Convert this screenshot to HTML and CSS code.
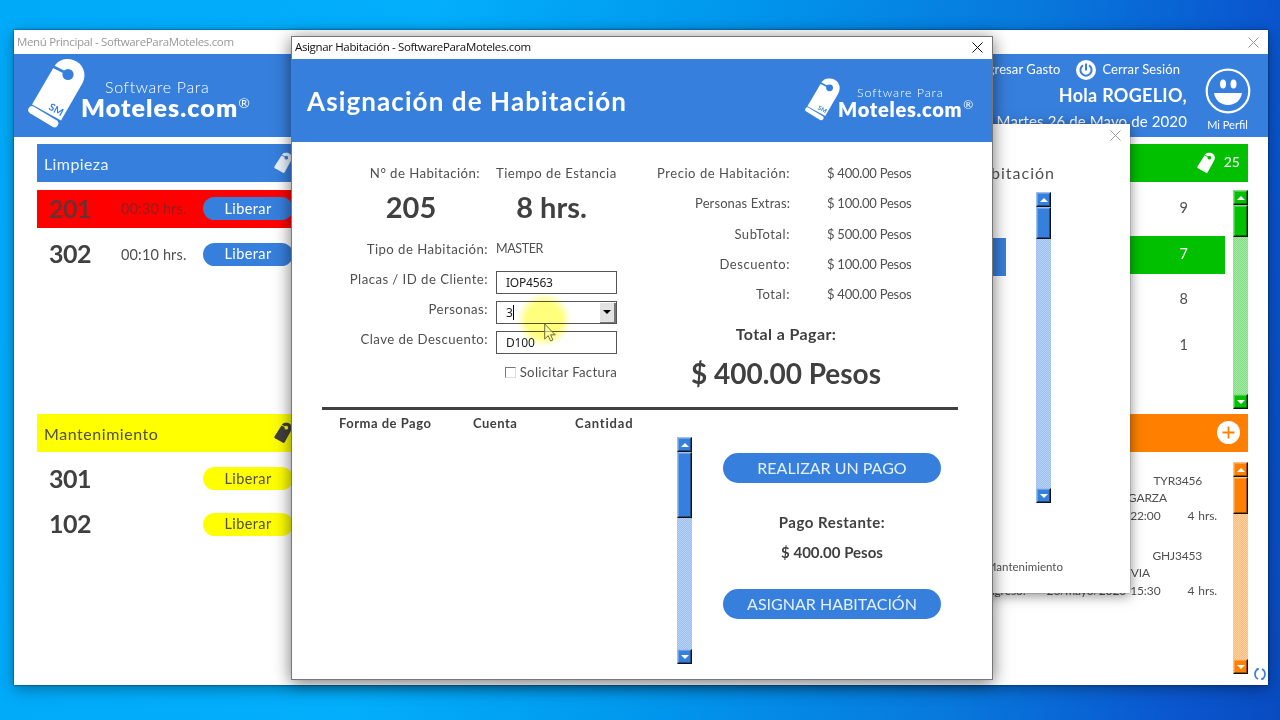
FILE: index.html
```html
<!DOCTYPE html>
<html lang="es">
  <head>
    <meta charset="utf-8" />
    <title>SoftwareParaMoteles.com</title>
    <link rel="stylesheet" href="styles.css">
  </head>
  <body>
    <svg class="sprites" width="0" height="0">
      <defs>
        <mask id="tagHole">
          <rect width="60" height="70" fill="#fff" />
          <path d="M22 6L38 14" stroke="#000" stroke-width="2.6" />
          <circle cx="40" cy="15.5" r="5.6" fill="#000" />
        </mask>
        <symbol id="tag" viewBox="0 0 57 63">
          <path d="M25 9.500L4.500 42Q3 45 6 47L30 61Q33 62 35 59L54 25C61 12 52 0 39 0C35 0 31 1.500 28 5Z" fill="currentColor" mask="url(#tagHole)" />
        </symbol>
        <symbol id="logo" viewBox="0 0 57 69">
          <path d="M25 9.500L4 45.500L33 61.500L54 25C61 12 52 0 39 0C35 0 31 1.500 28 5Z" fill="currentColor" mask="url(#tagHole)" />
          <path d="M4 51L26.500 64.500" stroke="currentColor" stroke-width="7.500" stroke-linecap="round" />
          <text x="20" y="50" transform="rotate(29 20 50)" font-size="10" font-weight="bold" font-family="Lato, sans-serif" fill="#377fdd">SM</text>
        </symbol>
      </defs>
    </svg>

    <div class="window main">
      <div class="titlebar">
        <span>Menú Principal - SoftwareParaMoteles.com</span>
        <svg class="close" viewBox="0 0 11 11"><path d="M.5.5l10 10M10.500.5l-10 10" /></svg>
      </div>
      <div class="header">
        <div class="brand">
          <svg class="brand-tag"><use href="#logo" /></svg>
          <div class="brand-name">
            <span class="brand-top">Software Para</span>
            <span class="brand-bottom">Moteles.com<sup>®</sup></span>
          </div>
        </div>
        <div class="session">
          <div class="links">
            <span class="link">Ingresar Gasto</span>
            <svg class="power" viewBox="0 0 20 20">
              <circle cx="10" cy="10" r="10" fill="#fff" />
              <path d="M7 5.300a5.600 5.600 0 1 0 6 0M10 3.500v7" fill="none" stroke="#377fdd" stroke-width="2" />
            </svg>
            <span class="link">Cerrar Sesión</span>
          </div>
          <div class="hello">Hola ROGELIO,</div>
          <div class="today">Martes 26 de Mayo de 2020</div>
        </div>
        <div class="profile">
          <svg viewBox="0 0 46 46">
            <circle cx="23" cy="23" r="21.300" fill="none" stroke="#fff" stroke-width="2.200" />
            <ellipse cx="18" cy="16" rx="3" ry="4.500" fill="#fff" />
            <ellipse cx="28.500" cy="16" rx="3" ry="4.500" fill="#fff" />
            <path d="M9 25h28c-1 7-6.500 12-14 12S10 32 9 25z" fill="#fff" />
          </svg>
          <span>Mi Perfil</span>
        </div>
      </div>

      <div class="panels">
        <div class="col left">
          <div class="bar blue"><span>Limpieza</span><svg class="tag-icon"><use href="#tag" /></svg></div>
          <div class="room late"><b>201</b><span>00:30 hrs.</span><button>Liberar</button></div>
          <div class="room"><b>302</b><span>00:10 hrs.</span><button>Liberar</button></div>
          <div class="bar yellow"><span>Mantenimiento</span><svg class="tag-icon"><use href="#tag" /></svg></div>
          <div class="room upkeep"><b>301</b><span></span><button>Liberar</button></div>
          <div class="room upkeep"><b>102</b><span></span><button>Liberar</button></div>
        </div>

        <div class="col right">
          <div class="bar green"><svg class="tag-icon"><use href="#tag" /></svg><span>25</span></div>
          <div class="list free">
            <div class="rows">
              <div class="count">9</div>
              <div class="count active">7</div>
              <div class="count">8</div>
              <div class="count">1</div>
            </div>
            <div class="scroll s-green"><i class="up"></i><i class="thumb"></i><i class="track"></i><i class="down"></i></div>
          </div>
          <div class="bar orange">
            <svg class="plus" viewBox="0 0 23 23"><circle cx="11.500" cy="11.500" r="11.500" fill="#fff" /><path d="M11.500 5.500v12M5.500 11.500h12" stroke="#ff8000" stroke-width="1.800" /></svg>
          </div>
          <div class="list busy">
            <div class="rows">
              <div class="guest">
                <div class="plate">TYR3456</div>
                <div class="model garza">GARZA</div>
                <div class="entry"><span>Ingreso:</span><span>25/mayo/2020 22:00</span><span>4 hrs.</span></div>
              </div>
              <div class="guest">
                <div class="plate">GHJ3453</div>
                <div class="model">OLIVIA</div>
                <div class="entry"><span>Ingreso:</span><span>26/mayo/2020 15:30</span><span>4 hrs.</span></div>
              </div>
            </div>
            <div class="scroll s-orange"><i class="up"></i><i class="thumb"></i><i class="track"></i><i class="down"></i></div>
          </div>
        </div>
      </div>
      <svg class="refresh" viewBox="0 0 12 12"><path d="M4 1C0 3 0 9 4 11M8 1c4 2 4 8 0 10" /><path d="M2.500 1H5M9.500 11H7" /></svg>
    </div>

    <div class="window picker">
      <div class="titlebar"><svg class="close" viewBox="0 0 11 11"><path d="M.5.5l10 10M10.500.5l-10 10" /></svg></div>
      <div class="picker-title">Habitación</div>
      <div class="picker-list">
        <div class="picked"></div>
        <div class="scroll s-blue"><i class="up"></i><i class="thumb"></i><i class="track"></i><i class="down"></i></div>
      </div>
      <div class="picker-note">Mantenimiento</div>
    </div>

    <div class="window dialog">
      <div class="titlebar">
        <span>Asignar Habitación - SoftwareParaMoteles.com</span>
        <svg class="close" viewBox="0 0 11 11"><path d="M.5.5l10 10M10.500.5l-10 10" /></svg>
      </div>
      <div class="header">
        <h1>Asignación de Habitación</h1>
        <div class="brand small">
          <svg class="brand-tag"><use href="#logo" /></svg>
          <div class="brand-name">
            <span class="brand-top">Software Para</span>
            <span class="brand-bottom">Moteles.com<sup>®</sup></span>
          </div>
        </div>
      </div>

      <div class="details">
        <div class="form">
          <div class="label first">N° de Habitación:</div>
          <div class="stay">Tiempo de Estancia</div>
          <div class="big number">205</div>
          <div class="big">8 hrs.</div>
          <div class="label type">Tipo de Habitación:</div>
          <div class="type master">MASTER</div>
          <label class="label" for="plate">Placas / ID de Cliente:</label>
          <input id="plate" value="IOP4563" />
          <label class="label" for="people">Personas:</label>
          <div class="combo"><span id="people">3</span><i class="caret"></i><span class="arrow"></span></div>
          <label class="label" for="code">Clave de Descuento:</label>
          <input id="code" value="D100" />
          <div class="invoice"><i class="box"></i><span>Solicitar Factura</span></div>
        </div>

        <div class="prices">
          <div class="price"><span>Precio de Habitación:</span><span>$ 400.00 Pesos</span></div>
          <div class="price extras"><span>Personas Extras:</span><span>$ 100.00 Pesos</span></div>
          <div class="price"><span>SubTotal:</span><span>$ 500.00 Pesos</span></div>
          <div class="price"><span>Descuento:</span><span>$ 100.00 Pesos</span></div>
          <div class="price"><span>Total:</span><span>$ 400.00 Pesos</span></div>
          <div class="due">Total a Pagar:</div>
          <div class="amount">$ 400.00 Pesos</div>
        </div>
      </div>

      <div class="payments">
        <div class="heads"><b>Forma de Pago</b><b>Cuenta</b><b>Cantidad</b></div>
        <div class="scroll s-blue"><i class="up"></i><i class="thumb"></i><i class="track"></i><i class="down"></i></div>
        <div class="actions">
          <button class="pay">REALIZAR UN PAGO</button>
          <div class="rest">Pago Restante:</div>
          <div class="rest">$ 400.00 Pesos</div>
          <button class="assign">ASIGNAR HABITACIÓN</button>
        </div>
      </div>
    </div>

    <div class="spot"></div>
    <svg class="cursor" viewBox="0 0 12 19"><path d="M.7 1v15l3.500-3.300L6.600 18l2.300-1-2.300-5.200h4.600z" fill="#fffbb0" fill-opacity=".6" stroke="#6d6a3a" /></svg>
  </body>
</html>
```

FILE: styles.css
```css
* {
  box-sizing: border-box;
}

body {
  margin: 0;
  height: 720px;
  overflow: hidden;
  position: relative;
  font-family: Lato, sans-serif;
  color: #505050;
  background: linear-gradient(97deg, #00aaf9 0%, #03aefb 32%, #0098ee 53%, #0878dc 76%, #0a57cf 92%, #084bc0 100%);
}

.sprites {
  position: absolute;
}

button {
  font-family: inherit;
  border: none;
  padding: 0;
}

/* windows */
.window {
  position: absolute;
  background: #fff;
  overflow: hidden;
}

.main {
  left: 14px;
  top: 30px;
  width: 1254px;
  height: 655px;
  box-shadow: 0 0 2px rgba(0, 30, 60, 0.8), 0 4px 14px rgba(0, 0, 0, 0.35);
}

.picker {
  left: 740px;
  top: 124px;
  width: 390px;
  height: 469px;
  box-shadow: 0 0 1px #555, 0 2px 12px rgba(0, 0, 0, 0.5);
}

.dialog {
  left: 291px;
  top: 36px;
  width: 702px;
  height: 644px;
  border: 1px solid #777;
  box-shadow: 0 3px 16px rgba(0, 0, 0, 0.55);
}

.titlebar {
  height: 24px;
  padding: 0 9px 0 3px;
  display: flex;
  align-items: center;
  justify-content: space-between;
  font: 11.5px/20px "Open Sans", sans-serif;
  letter-spacing: -0.35px;
  color: #999;
}

.dialog .titlebar {
  height: 22px;
  padding-bottom: 2px;
  color: #111;
}

.close {
  width: 11px;
  height: 11px;
  margin-left: auto;
  fill: none;
  stroke: #999;
}

.dialog .close {
  stroke: #111;
}

.header {
  height: 83px;
  display: flex;
  background: #377fdd;
  color: #fff;
}

/* logo */
.brand {
  display: flex;
  padding: 5px 0 0 14px;
}

.brand-tag {
  width: 57px;
  height: 69px;
}

.brand-name {
  display: flex;
  flex-direction: column;
  margin: 17px 0 0 -4px;
}

.brand-top {
  padding-left: 24px;
  font-size: 16px;
  line-height: 21px;
  font-weight: 300;
  letter-spacing: 0.65px;
}

.brand-bottom {
  font-size: 25px;
  line-height: 20px;
  font-weight: 800;
  letter-spacing: 1.05px;
  white-space: nowrap;
}

.brand-bottom sup {
  font-size: 14px;
  line-height: 0;
  font-weight: 400;
}

/* session block */
.session {
  margin-left: auto;
  width: 300px;
  text-align: right;
}

.links {
  display: flex;
  justify-content: flex-end;
  align-items: center;
  height: 31px;
  padding-right: 7px;
}

.link {
  font-size: 13px;
  line-height: 16px;
  margin-top: -2px;
  letter-spacing: 0.1px;
}

.power {
  width: 20px;
  height: 20px;
  margin: 0 6px 0 16px;
}

.hello {
  font-size: 18px;
  line-height: 21px;
  font-weight: 700;
  letter-spacing: 0.3px;
}

.today {
  font-size: 15px;
  line-height: 30px;
  letter-spacing: 0.12px;
}

.profile {
  width: 81px;
  padding-top: 14px;
  display: flex;
  flex-direction: column;
  align-items: center;
  font-size: 11px;
  line-height: 21px;
}

.profile svg {
  width: 46px;
  height: 46px;
}

/* side columns */
.panels {
  display: flex;
  justify-content: space-between;
  padding: 7px 20px 0 23px;
}

.left {
  width: 270px;
}

.right {
  width: 260px;
}

.bar {
  height: 38px;
  display: flex;
  align-items: center;
  padding: 0 15px 0 7px;
  font-size: 16px;
  letter-spacing: 0.4px;
}

.left .bar span {
  width: 229px;
}

.blue {
  background: #377fdd;
  color: #eaf2fc;
}

.yellow {
  background: #ff0;
  margin-top: 141px;
}

.yellow span {
  letter-spacing: 0.55px;
}

.yellow .tag-icon {
  color: #404040;
}

.green,
.orange {
  justify-content: flex-end;
  padding-right: 8px;
  color: #fff;
}

.green {
  background: #00c000;
  font-size: 14px;
  letter-spacing: 0;
  gap: 9px;
}

.green span {
  margin-top: -3px;
}

.orange {
  background: #ff8000;
}

.tag-icon {
  width: 19px;
  height: 22px;
}

.plus {
  width: 23px;
  height: 23px;
  margin-top: -2px;
}

.room {
  height: 38px;
  margin-top: 7.5px;
  padding-left: 12px;
  display: flex;
  align-items: center;
}

.room b {
  width: 72px;
  padding-bottom: 2px;
  font-size: 25px;
  letter-spacing: -0.5px;
  color: #404040;
}

.room span {
  width: 82px;
  font-size: 14.5px;
  letter-spacing: 0.15px;
}

.room button {
  width: 90px;
  height: 23px;
  padding-bottom: 1px;
  border-radius: 12px;
  background: #377fdd;
  color: #fff;
  font-size: 14.5px;
  letter-spacing: 0.4px;
}

.late {
  background: #f00;
}

.room.late b {
  color: #6d3030;
}

.late span {
  color: #941c1c;
}

.upkeep button {
  background: #ff0;
  color: #505050;
}

.list {
  display: flex;
  justify-content: flex-end;
}

.rows {
  flex: 1;
  padding-right: 8px;
}

.free {
  height: 232px;
  padding-top: 8px;
}

.free .scroll {
  height: 219px;
}

.count {
  height: 38px;
  margin-bottom: 7.5px;
  padding-right: 37px;
  text-align: right;
  font-size: 14.5px;
  line-height: 36px;
}

.active {
  background: #00c000;
  color: #fff;
}

.busy {
  padding-top: 10px;
}

.busy .scroll {
  height: 212px;
}

.guest {
  height: 75px;
  padding-top: 10px;
  text-align: right;
  font-size: 12px;
  line-height: 18px;
  letter-spacing: -0.1px;
  white-space: nowrap;
}

.plate {
  padding-right: 23px;
  letter-spacing: -0.2px;
}

.model {
  padding-right: 75px;
  line-height: 16px;
}

.garza {
  padding-right: 58px;
}

.entry {
  display: flex;
  justify-content: flex-end;
  padding-right: 8px;
  line-height: 19px;
  word-spacing: 1px;
}

.entry span {
  margin-left: 21px;
}

.entry span:last-child {
  margin-left: 27px;
}

.refresh {
  position: absolute;
  right: 2px;
  bottom: 5px;
  width: 12px;
  height: 12px;
  fill: none;
  stroke: #377fdd;
  stroke-width: 1.6;
}

/* old style scrollbars */
.scroll {
  --c: #377fdd;
  --light: #9bbfee;
  flex: none;
  width: 15px;
  display: flex;
  flex-direction: column;
}

.s-green {
  --c: #00c000;
  --light: #80df80;
}

.s-orange {
  --c: #ff8000;
  --light: #fbbd7c;
}

.up,
.down,
.thumb {
  background: var(--c);
  border: 1px solid;
  border-color: rgba(255, 255, 255, 0.5) #111 #111 rgba(255, 255, 255, 0.5);
  box-shadow: inset -1px -1px rgba(0, 0, 0, 0.4), inset 1px 1px rgba(255, 255, 255, 0.25);
  flex: none;
}

.up,
.down {
  height: 15px;
  display: flex;
  align-items: center;
  justify-content: center;
}

.up::after,
.down::after {
  content: "";
  border: 4px solid transparent;
  border-top: none;
  border-bottom-color: #fff;
}

.down::after {
  border: 4px solid transparent;
  border-bottom: none;
  border-top-color: #fff;
}

.thumb {
  height: 32px;
}

.s-orange .thumb {
  height: 37px;
}

.track {
  flex: 1;
  background: repeating-conic-gradient(rgba(255, 255, 255, 0.3) 0 25%, transparent 0 50%) 0 0 / 2px 2px var(--light);
}

/* room picker */
.picker .titlebar {
  height: 22px;
}

.picker-title {
  width: 315px;
  text-align: right;
  font-size: 16px;
  line-height: 54px;
  letter-spacing: 1px;
}

.picker-list {
  display: flex;
  justify-content: flex-end;
  height: 311px;
  margin-top: -8px;
  padding-right: 79px;
}

.picked {
  width: 160px;
  height: 38px;
  margin: 46px 30px 0 0;
  background: #377fdd;
}

.picker-note {
  width: 323px;
  margin-top: 55px;
  text-align: right;
  font-size: 11.5px;
  line-height: 18px;
}

/* assign dialog */
.dialog .header {
  justify-content: space-between;
  padding-right: 18px;
}

h1 {
  margin: 0 0 0 15px;
  font-size: 26px;
  line-height: 85px;
  letter-spacing: 1.1px;
}

.small {
  padding: 19px 0 0;
}

.small .brand-tag {
  width: 35px;
  height: 43px;
}

.small .brand-name {
  margin: 6px 0 0 -2px;
}

.small .brand-top {
  padding-left: 19px;
  font-size: 12.5px;
  line-height: 17px;
  letter-spacing: 0.9px;
}

.small .brand-bottom {
  font-size: 20px;
  line-height: 16px;
  letter-spacing: 0.7px;
}

.small sup {
  font-size: 12px;
  margin-left: 1px;
}

.details {
  display: flex;
  height: 249px;
  padding-top: 16px;
}

.form {
  display: grid;
  grid-template-columns: 196px 121px;
  grid-template-rows: 30px 40px 42px 30px 30px 30px 30px;
  column-gap: 8px;
  font-size: 13.2px;
  letter-spacing: 0.45px;
}

.label {
  text-align: right;
  line-height: 18px;
}

.form .first,
.stay {
  line-height: 31px;
  white-space: nowrap;
}

.first {
  padding-right: 8px;
}

.big {
  font-size: 29px;
  line-height: 38px;
  font-weight: 700;
  letter-spacing: 0;
  text-align: center;
  padding-right: 10px;
  color: #404040;
}

.number {
  padding: 0 0 0 42px;
}

.form .type {
  line-height: 42px;
}

.master {
  font-size: 12.5px;
  letter-spacing: -0.4px;
}

.form input,
.combo {
  width: 121px;
  height: 23px;
  margin-top: 1px;
  padding: 0 9px;
  border: 1px solid #555;
  background: #fff;
  font: 12px "Noto Sans", sans-serif;
  letter-spacing: -0.2px;
  color: #222;
}

.combo {
  display: flex;
  align-items: center;
  padding-right: 0;
}

.caret {
  width: 1px;
  height: 15px;
  background: #000;
}

.arrow {
  width: 16px;
  height: 20px;
  margin-left: auto;
  background: #e3e3e3;
  border-right: 2px solid #777;
  border-bottom: 1px solid #777;
  display: flex;
  align-items: center;
  justify-content: center;
}

.arrow::after {
  content: "";
  border: 4px solid transparent;
  border-top-color: #000;
  border-bottom: none;
}

.invoice {
  grid-column: 2;
  display: flex;
  justify-content: flex-end;
  line-height: 25px;
  letter-spacing: 0.3px;
  white-space: nowrap;
}

.box {
  width: 11px;
  height: 11px;
  margin: 7px 4px 0 0;
  border: 1px solid #777;
  border-right-color: #ddd;
  border-bottom-color: #ddd;
}

.prices {
  width: 341px;
}

.price {
  display: grid;
  grid-template-columns: 173px 130px;
  column-gap: 37px;
  height: 30.25px;
  line-height: 31px;
  font-size: 13px;
}

.price span:first-child {
  text-align: right;
  letter-spacing: 0.55px;
}

.extras span:first-child {
  letter-spacing: 0.1px;
}

.price span:last-child {
  letter-spacing: -0.25px;
}

.due,
.amount {
  width: 338px;
  text-align: center;
  font-weight: 700;
  color: #404040;
}

.due {
  margin-top: 9px;
  font-size: 16px;
  line-height: 31px;
  letter-spacing: 0.4px;
}

.amount {
  font-size: 28px;
  line-height: 48px;
}

.payments {
  display: flex;
  margin: 16px 34px 0 30px;
  border-top: 3px solid #404040;
}

.heads {
  display: flex;
  flex: none;
  width: 355px;
  padding-left: 17px;
  font-size: 13px;
  line-height: 26px;
  letter-spacing: 0.5px;
  white-space: nowrap;
  color: #404040;
}

.heads b {
  flex: none;
  width: 134px;
}

.heads b:nth-child(2) {
  width: 102px;
}

.heads b:last-child {
  width: 60px;
  letter-spacing: 0.8px;
}

.payments .scroll {
  height: 227px;
  margin-top: 27px;
}

.payments .thumb {
  height: 66px;
}

.actions {
  flex: none;
  width: 218px;
  margin: 43px 0 0 31px;
  text-align: center;
}

.actions button {
  display: block;
  width: 218px;
  height: 30px;
  padding-bottom: 2px;
  border-radius: 15px;
  background: #377fdd;
  color: #e4f1ff;
  font-size: 16px;
}

.pay {
  margin-bottom: 24px;
}

.actions .assign {
  margin-top: 22px;
}

.rest {
  font-size: 15px;
  line-height: 30px;
  font-weight: 700;
  color: #404040;
}

.actions .pay + .rest {
  letter-spacing: 0.5px;
}

/* pointer */
.spot {
  position: absolute;
  left: 517px;
  top: 293px;
  width: 54px;
  height: 54px;
  border-radius: 50%;
  background: radial-gradient(circle, #ffff7c 0 45%, rgba(255, 255, 150, 0) 71%);
  mix-blend-mode: multiply;
}

.cursor {
  position: absolute;
  left: 544px;
  top: 323px;
  width: 12px;
  height: 19px;
}
```
